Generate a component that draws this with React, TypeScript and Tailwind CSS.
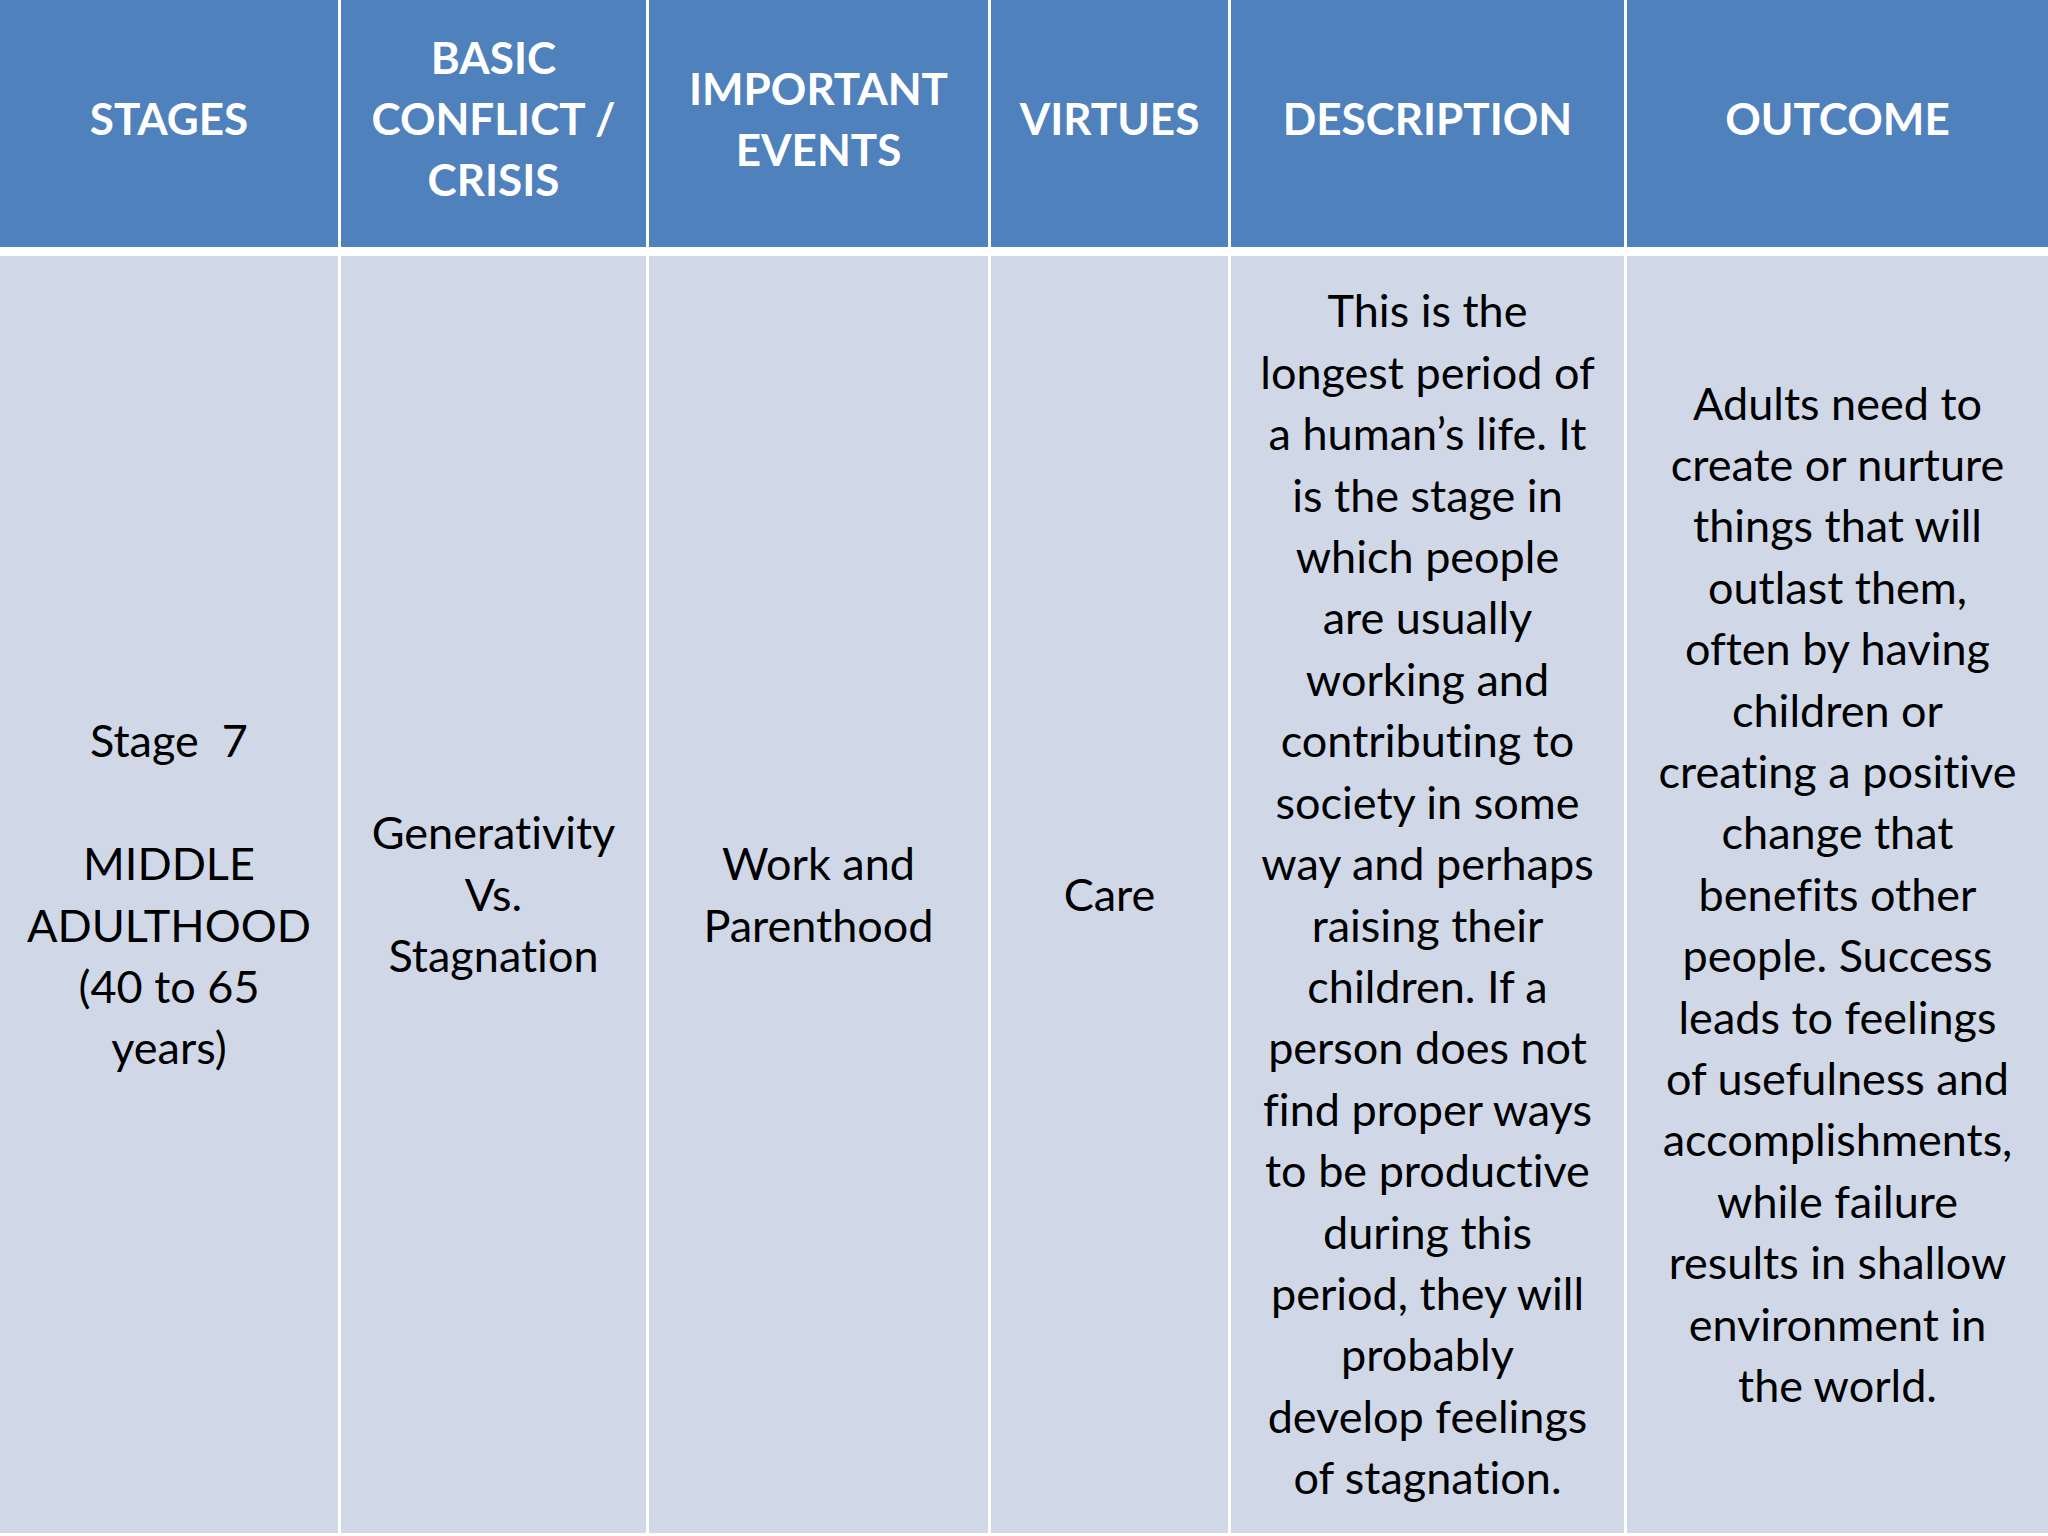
const headers: string[][] = [
  ["STAGES"],
  ["BASIC", "CONFLICT /", "CRISIS"],
  ["IMPORTANT", "EVENTS"],
  ["VIRTUES"],
  ["DESCRIPTION"],
  ["OUTCOME"],
];

const body: string[][] = [
  ["Stage  7", "\u00a0", "MIDDLE", "ADULTHOOD", "(40 to 65", "years)"],
  ["Generativity", "Vs.", "Stagnation"],
  ["Work and", "Parenthood"],
  ["Care"],
  [
    "This is the",
    "longest period of",
    "a human\u2019s life. It",
    "is the stage in",
    "which people",
    "are usually",
    "working and",
    "contributing to",
    "society in some",
    "way and perhaps",
    "raising their",
    "children. If a",
    "person does not",
    "find proper ways",
    "to be productive",
    "during this",
    "period, they will",
    "probably",
    "develop feelings",
    "of stagnation.",
  ],
  [
    "Adults need to",
    "create or nurture",
    "things that will",
    "outlast them,",
    "often by having",
    "children or",
    "creating a positive",
    "change that",
    "benefits other",
    "people. Success",
    "leads to feelings",
    "of usefulness and",
    "accomplishments,",
    "while failure",
    "results in shallow",
    "environment in",
    "the world.",
  ],
];

function Lines({ lines }: { lines: string[] }) {
  return (
    <div className="flex flex-col items-center">
      {lines.map((line, i) => (
        <div key={i} className="whitespace-pre">
          {line}
        </div>
      ))}
    </div>
  );
}

export default function App() {
  return (
    <div className="h-[1536px] w-[2048px] overflow-hidden bg-white font-['Lato',sans-serif]">
      <div className="grid grid-cols-[338px_305px_339px_237px_393px_421px] grid-rows-[247px_1277px] gap-x-[3px] gap-y-[9px]">
        {headers.map((lines, i) => (
          <div
            key={i}
            className="flex items-center justify-center bg-[#4f81bd] pb-[10px] text-center text-[44px] font-bold leading-[61px] text-white"
          >
            <Lines lines={lines} />
          </div>
        ))}
        {body.map((lines, i) => (
          <div
            key={i}
            className="flex items-center justify-center bg-[#d0d8e8] text-center text-[45px] leading-[61.4px] text-black [font-variant-ligatures:none]"
          >
            <Lines lines={lines} />
          </div>
        ))}
      </div>
    </div>
  );
}
